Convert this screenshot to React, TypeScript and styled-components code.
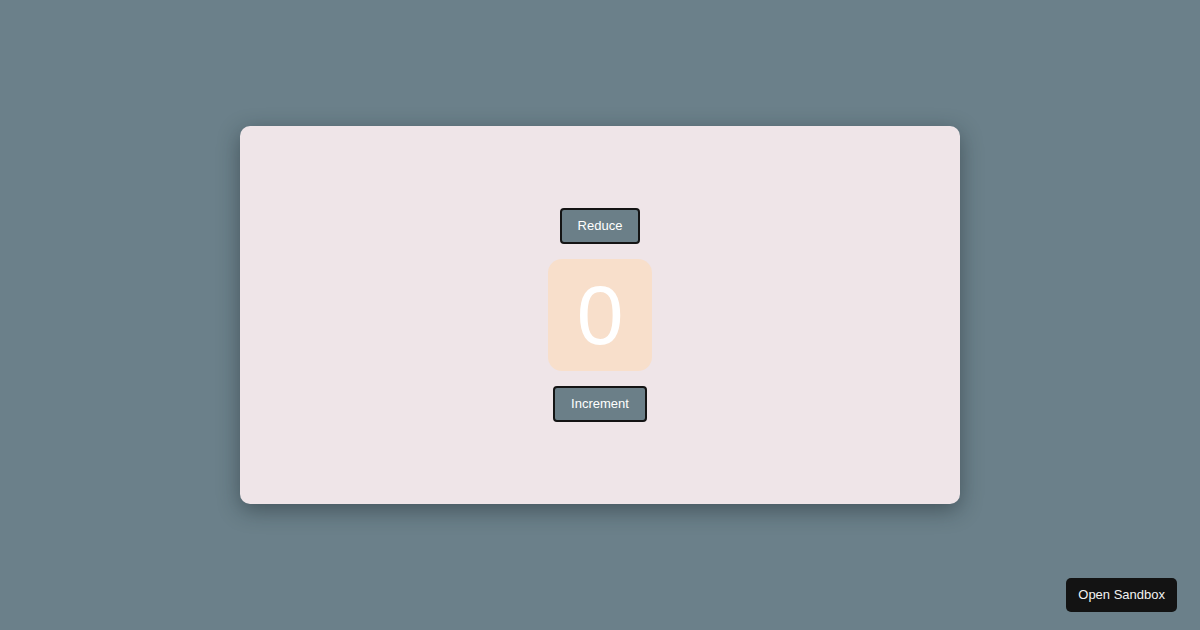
import React, { useState } from "react";
import styled, { createGlobalStyle } from "styled-components";

const GlobalStyle = createGlobalStyle`
  html, body {
    margin: 0;
    padding: 0;
    height: 100%;
  }
  body {
    background: #6b808a;
    font-family: "Liberation Sans", Arial, sans-serif;
  }
  #root {
    height: 100%;
  }
`;

const Page = styled.div`
  height: 630px;
  display: flex;
  align-items: center;
  justify-content: center;
  position: relative;
`;

const Card = styled.div`
  width: 720px;
  height: 378px;
  background: #efe5e8;
  border-radius: 10px;
  box-shadow: 0 6px 22px rgba(20, 30, 35, 0.45);
  display: flex;
  flex-direction: column;
  align-items: center;
  justify-content: center;
  gap: 15px;
`;

const Button = styled.button`
  background: #6b7f88;
  color: #ffffff;
  border: 2px solid #141414;
  border-radius: 4px;
  font-family: "Liberation Sans", Arial, sans-serif;
  font-size: 13px;
  line-height: 16px;
  padding: 8px 16px;
  cursor: pointer;
`;

const Counter = styled.div`
  width: 104px;
  height: 112px;
  border-radius: 14px;
  background: #f8dfcb;
  color: #ffffff;
  display: flex;
  align-items: center;
  justify-content: center;
  font-family: "Liberation Sans", Arial, sans-serif;
  font-size: 84px;
  font-weight: 400;
  line-height: 1;
`;

const SandboxLink = styled.a`
  position: absolute;
  right: 23px;
  bottom: 18px;
  background: #131313;
  color: #f2f2f2;
  border-radius: 5px;
  font-family: "Liberation Sans", Arial, sans-serif;
  font-size: 13px;
  line-height: 16px;
  padding: 9px 12px;
  text-decoration: none;
`;

export default function App() {
  const [count, setCount] = useState(0);
  return (
    <>
      <GlobalStyle />
      <Page>
        <Card>
          <Button onClick={() => setCount(c => c - 1)}>Reduce</Button>
          <Counter>{count}</Counter>
          <Button onClick={() => setCount(c => c + 1)}>Increment</Button>
        </Card>
        <SandboxLink href="#">Open Sandbox</SandboxLink>
      </Page>
    </>
  );
}
